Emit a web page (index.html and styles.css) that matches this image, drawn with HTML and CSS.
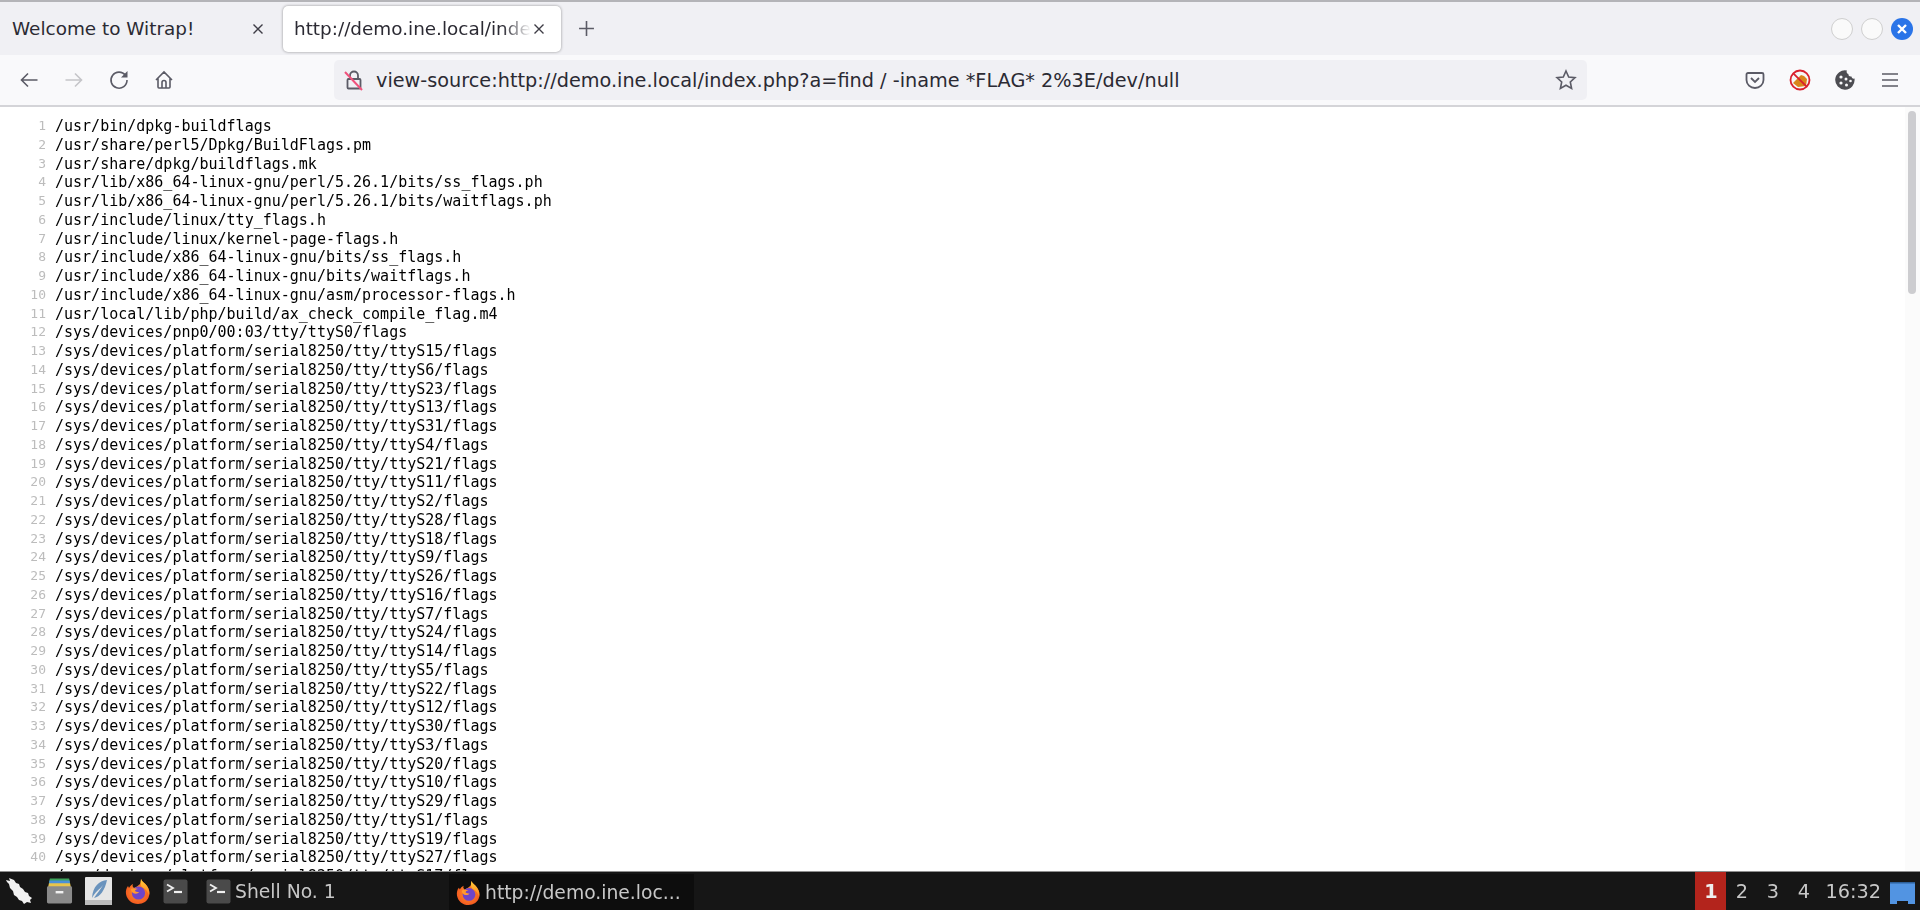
FILE: index.html
```html
<!DOCTYPE html>
<html lang="en">
<head>
<meta charset="utf-8">
<title>view-source</title>
<link rel="stylesheet" href="styles.css">
</head>
<body>
<svg class="defs" width="0" height="0" aria-hidden="true">
  <defs>
    <radialGradient id="fxBody" cx="50%" cy="50%" r="55%"><stop offset="0" stop-color="#ff9a2e"/><stop offset="1" stop-color="#f2551f"/></radialGradient>
    <linearGradient id="fxFlame" x1="0" y1="0" x2="0" y2="1"><stop offset="0" stop-color="#ffd23a"/><stop offset="1" stop-color="#ff7a1f"/></linearGradient>
    <symbol id="firefox" viewBox="0 0 26 26">
      <path d="M16 1c1 3 4 4 6 7 2 3 3 6 2 10-1 5-6 8-11 8C7 26 2 22 1 16c-.4-3 .2-6 2-8l1 2c1-2 2-3 4-4-1 2 0 3 1 4 2-1 4-2 6-4 1-2 1-3 1-5z" fill="url(#fxBody)"/>
      <path d="M16 1c1 3 4 4 6 7 2 3 3 6 2 10-1-4-3-7-7-9-1-1-2-3-1-8z" fill="url(#fxFlame)"/>
      <circle cx="13.5" cy="15" r="6.6" fill="#6e45c9"/>
      <path d="M6 11c2-1 5-1 7 0 -2 0-3 1-3 2 1 1 3 1 4 1-1 2-4 2-6 1-1-1-2-2-2-4z" fill="#ff9a2e"/>
    </symbol>
    <symbol id="term" viewBox="0 0 25 25">
      <rect x=".5" y=".5" width="24" height="24" rx="2" fill="#4a4a4a"/>
      <path d="M4 5.5l6 3.5-6 3.5" fill="none" stroke="#f0f0f0" stroke-width="1.8"/>
      <path d="M11 13h8" stroke="#f0f0f0" stroke-width="2.2"/>
    </symbol>
  </defs>
</svg>
<div class="window">
  <header class="tabstrip">
    <div class="tab tab-idle">
      <span class="tab-title">Welcome to Witrap!</span>
      <svg class="tab-close" viewBox="0 0 12 12"><path d="M1.5 1.5l9 9M10.5 1.5l-9 9"/></svg>
    </div>
    <div class="tab tab-active">
      <span class="tab-title tab-fade">http://demo.ine.local/index.php?a=find</span>
      <svg class="tab-close" viewBox="0 0 12 12"><path d="M1.5 1.5l9 9M10.5 1.5l-9 9"/></svg>
    </div>
    <svg class="new-tab" viewBox="0 0 16 16"><path d="M8 1v14M1 8h14"/></svg>
    <div class="win-controls">
      <span class="win-btn"></span>
      <span class="win-btn"></span>
      <span class="win-btn win-close"><svg viewBox="0 0 22 22"><path d="M7 7l8 8M15 7l-8 8"/></svg></span>
    </div>
  </header>
  <nav class="toolbar">
    <div class="nav-group">
      <svg class="icon" viewBox="0 0 20 20"><path d="M18.5 10H2.5M9 3.5L2.5 10 9 16.5"/></svg>
      <svg class="icon icon-off" viewBox="0 0 20 20"><path d="M1.5 10h16M11 3.5l6.500 6.500-6.500 6.500"/></svg>
      <svg class="icon" viewBox="0 0 20 20"><path d="M16.500 5.500A8 8 0 1 0 18 10"/><path class="solid" d="M12 7.500h6.500V1z"/></svg>
      <svg class="icon" viewBox="0 0 20 20"><path d="M2 10L10 2l8 8M4 8.500V17a1 1 0 0 0 1 1h10a1 1 0 0 0 1-1V8.500M8 18v-5.500a2 2 0 0 1 4 0V18"/></svg>
    </div>
    <div class="urlbar">
      <svg class="lock" viewBox="0 0 22 22">
        <path d="M7 10V6.500a4 4 0 0 1 8 0V10M5.500 10h11a1 1 0 0 1 1 1v7.500a1 1 0 0 1-1 1h-11a1 1 0 0 1-1-1V11a1 1 0 0 1 1-1z" fill="none" stroke="#5b5b66" stroke-width="1.8"/>
        <path d="M2 3l17 18" fill="none" stroke="#f0527c" stroke-width="2"/>
      </svg>
      <span class="url-text">view-source:http://demo.ine.local/index.php?a=find / -iname *FLAG* 2%3E/dev/null</span>
      <svg class="star" viewBox="0 0 22 22"><path d="M11 2l2.700 6 6.300.7-4.700 4.300 1.300 6.500L11 16.200 5.400 19.500 6.700 13 2 8.700 8.300 8z"/></svg>
    </div>
    <div class="tool-group">
      <svg class="icon pocket" viewBox="0 0 20 20"><path d="M3 3h14a1.500 1.500 0 0 1 1.500 1.500V10a8.500 8 0 0 1-17 0V4.500A1.500 1.500 0 0 1 3 3z"/><path d="M6 8l4 4 4-4"/></svg>
      <svg class="addon" viewBox="0 0 22 22">
        <circle cx="11" cy="11" r="9.500" fill="#f6f6f6"/>
        <path d="M4 14l8-8 3 1 3 3-1 7-8 1z" fill="#d9851c"/>
        <circle cx="11" cy="11" r="9.500" fill="none" stroke="#d9202e" stroke-width="1.800"/>
        <path d="M4.300 4.300l13.400 13.400" stroke="#d9202e" stroke-width="1.800"/>
      </svg>
      <svg class="addon" viewBox="0 0 22 22">
        <path d="M13 1.500a9.700 9.700 0 1 0 7.500 8c-1.500.5-3-.5-3-2-2 .5-3.500-1-3-2.500-1.500 0-2.500-2-1.500-3.500z" fill="#4d4d52"/>
        <circle cx="7" cy="8" r="1.600" fill="#f9f9fb"/><circle cx="12" cy="10" r="1.500" fill="#f9f9fb"/><circle cx="7" cy="14" r="1.600" fill="#f9f9fb"/><circle cx="12.500" cy="16" r="1.500" fill="#f9f9fb"/><circle cx="16.500" cy="12" r="1.300" fill="#f9f9fb"/>
      </svg>
      <svg class="icon menu" viewBox="0 0 20 20"><path d="M2 4h16M2 10h16M2 16h16"/></svg>
    </div>
  </nav>
  <main class="viewport">
    <ol class="source">
      <li>/usr/bin/dpkg-buildflags</li>
      <li>/usr/share/perl5/Dpkg/BuildFlags.pm</li>
      <li>/usr/share/dpkg/buildflags.mk</li>
      <li>/usr/lib/x86_64-linux-gnu/perl/5.26.1/bits/ss_flags.ph</li>
      <li>/usr/lib/x86_64-linux-gnu/perl/5.26.1/bits/waitflags.ph</li>
      <li>/usr/include/linux/tty_flags.h</li>
      <li>/usr/include/linux/kernel-page-flags.h</li>
      <li>/usr/include/x86_64-linux-gnu/bits/ss_flags.h</li>
      <li>/usr/include/x86_64-linux-gnu/bits/waitflags.h</li>
      <li>/usr/include/x86_64-linux-gnu/asm/processor-flags.h</li>
      <li>/usr/local/lib/php/build/ax_check_compile_flag.m4</li>
      <li>/sys/devices/pnp0/00:03/tty/ttyS0/flags</li>
      <li>/sys/devices/platform/serial8250/tty/ttyS15/flags</li>
      <li>/sys/devices/platform/serial8250/tty/ttyS6/flags</li>
      <li>/sys/devices/platform/serial8250/tty/ttyS23/flags</li>
      <li>/sys/devices/platform/serial8250/tty/ttyS13/flags</li>
      <li>/sys/devices/platform/serial8250/tty/ttyS31/flags</li>
      <li>/sys/devices/platform/serial8250/tty/ttyS4/flags</li>
      <li>/sys/devices/platform/serial8250/tty/ttyS21/flags</li>
      <li>/sys/devices/platform/serial8250/tty/ttyS11/flags</li>
      <li>/sys/devices/platform/serial8250/tty/ttyS2/flags</li>
      <li>/sys/devices/platform/serial8250/tty/ttyS28/flags</li>
      <li>/sys/devices/platform/serial8250/tty/ttyS18/flags</li>
      <li>/sys/devices/platform/serial8250/tty/ttyS9/flags</li>
      <li>/sys/devices/platform/serial8250/tty/ttyS26/flags</li>
      <li>/sys/devices/platform/serial8250/tty/ttyS16/flags</li>
      <li>/sys/devices/platform/serial8250/tty/ttyS7/flags</li>
      <li>/sys/devices/platform/serial8250/tty/ttyS24/flags</li>
      <li>/sys/devices/platform/serial8250/tty/ttyS14/flags</li>
      <li>/sys/devices/platform/serial8250/tty/ttyS5/flags</li>
      <li>/sys/devices/platform/serial8250/tty/ttyS22/flags</li>
      <li>/sys/devices/platform/serial8250/tty/ttyS12/flags</li>
      <li>/sys/devices/platform/serial8250/tty/ttyS30/flags</li>
      <li>/sys/devices/platform/serial8250/tty/ttyS3/flags</li>
      <li>/sys/devices/platform/serial8250/tty/ttyS20/flags</li>
      <li>/sys/devices/platform/serial8250/tty/ttyS10/flags</li>
      <li>/sys/devices/platform/serial8250/tty/ttyS29/flags</li>
      <li>/sys/devices/platform/serial8250/tty/ttyS1/flags</li>
      <li>/sys/devices/platform/serial8250/tty/ttyS19/flags</li>
      <li>/sys/devices/platform/serial8250/tty/ttyS27/flags</li>
      <li>/sys/devices/platform/serial8250/tty/ttyS17/flags</li>
    </ol>
    <div class="scrolltrack"><div class="scrollthumb"></div></div>
  </main>
</div>
<footer class="taskbar">
  <div class="launchers">
    <svg class="launch launch-wm" viewBox="0 0 30 30"><path d="M2 4l4 1-1-3 5 2 2 3 3 1 1 3 3 2 2 3 3 1 1 3 3 2-2 2 1 3-4-1-3 2-2-3-3-1-2-3-3-2-1-4-3-3-1-4-2-2z" fill="#f2f2f2"/></svg>
    <svg class="launch" viewBox="0 0 28 28">
      <path d="M4 1h20l1 5H3z" fill="#3fa35c"/><path d="M3.500 3h21l.5 5H3z" fill="#4a90d9"/><path d="M3 6h22l1 5H2z" fill="#e8c54a"/>
      <rect x="1" y="9" width="26" height="18" rx="1.500" fill="#8a8a8a"/><rect x="10" y="14" width="8" height="2.500" fill="#f0f0f0"/>
    </svg>
    <svg class="launch" viewBox="0 0 27 28">
      <rect width="27" height="28" rx="1" fill="#e6e6e6"/><rect y="23" width="27" height="5" fill="#bdbdbd"/>
      <path d="M22 3C14 4 8 9 7 21c3-6 8-9 11-13-2 4-6 8-9 13 6-1 11-8 13-18z" fill="#6a93bd"/>
    </svg>
    <svg class="launch launch-fx"><use href="#firefox"/></svg>
    <svg class="launch launch-term"><use href="#term"/></svg>
  </div>
  <div class="task task-shell">
    <svg class="task-icon"><use href="#term"/></svg>
    <span class="task-label">Shell No. 1</span>
  </div>
  <div class="task task-browser">
    <svg class="task-icon"><use href="#firefox"/></svg>
    <span class="task-label">http://demo.ine.loc...</span>
  </div>
  <div class="tray">
    <span class="ws ws-active">1</span>
    <span class="ws">2</span>
    <span class="ws">3</span>
    <span class="ws">4</span>
    <span class="clock">16:32</span>
    <svg class="desk" viewBox="0 0 25 22"><path d="M0 1h25v21h-7v-3H7v3H0z" fill="#5294e2"/><path d="M0 0h25v1.500H0z" fill="#2c5f99"/></svg>
  </div>
</footer>
</body>
</html>
```

FILE: styles.css
```css
* { box-sizing: border-box; }
html, body { margin: 0; height: 100%; overflow: hidden; }
body {
  display: flex;
  flex-direction: column;
  height: 910px;
  background: #fff;
  font-family: "DejaVu Sans", sans-serif;
  filter: blur(.35px);
}
.defs { position: absolute; }
.window { flex: 1; min-height: 0; display: flex; flex-direction: column; overflow: hidden; }

.tabstrip {
  height: 55px;
  flex: none;
  display: flex;
  align-items: center;
  padding: 3px 7px 3px 0;
  background: #f0f0f4;
  border-top: 2px solid #b4b4b8;
}
.tab {
  height: 46px;
  flex: none;
  display: flex;
  align-items: center;
  color: #2b2a33;
  font-size: 18.400px;
}
.tab-idle { width: 275px; padding: 0 11px 0 12px; }
.tab-active {
  width: 278px;
  margin-left: 8px;
  background: #fff;
  border-radius: 5px;
  box-shadow: 0 0 3px rgba(0,0,0,.4);
  padding: 0 16px 0 11px;
}
.tab-title { flex: 1; min-width: 0; overflow: hidden; white-space: nowrap; }
.tab-fade {
  -webkit-mask-image: linear-gradient(to right, #000 88%, transparent 100%);
  mask-image: linear-gradient(to right, #000 88%, transparent 100%);
}
.tab-close { width: 12px; height: 12px; flex: none; margin-left: 2px; }
.tab-close path { stroke: #3e3d46; stroke-width: 1.400; fill: none; }
.new-tab { width: 17px; height: 17px; margin-left: 17px; }
.new-tab path { stroke: #5b5b66; stroke-width: 1.500; fill: none; }
.win-controls { margin-left: auto; display: flex; gap: 8px; }
.win-btn {
  width: 22px;
  height: 22px;
  border-radius: 50%;
  background: #fafafa;
  border: 1px solid #cfcfcf;
}
.win-close { background: #2a74e8; border: 0; }
.win-close svg { display: block; width: 22px; height: 22px; }
.win-close path { stroke: #fff; stroke-width: 2.400; fill: none; }

.toolbar {
  height: 52px;
  flex: none;
  display: flex;
  align-items: center;
  padding-right: 12px;
  background: #f9f9fb;
  border-bottom: 2px solid #d4d4d8;
}
.icon { width: 20px; height: 20px; flex: none; }
.icon path { fill: none; stroke: #5b5b66; stroke-width: 1.600; }
.icon path.solid { fill: #5b5b66; stroke: none; }
.icon-off path { stroke: #c5c5c9; }
.nav-group {
  width: 334px;
  display: flex;
  align-items: center;
  gap: 25px;
  padding-left: 19px;
}
.urlbar {
  width: 1253px;
  height: 40px;
  flex: none;
  display: flex;
  align-items: center;
  padding: 0 10px 0 9px;
  background: #f0f0f4;
  border-radius: 5px;
  color: #2b2a33;
  font-size: 19.250px;
}
.lock { width: 22px; height: 22px; flex: none; }
.url-text { margin-left: 11px; flex: 1; white-space: nowrap; }
.star { width: 22px; height: 22px; flex: none; }
.star path { fill: none; stroke: #5b5b66; stroke-width: 1.600; }
.tool-group {
  flex: 1;
  display: flex;
  align-items: center;
  justify-content: space-between;
  padding: 0 8px 0 158px;
}
.addon { width: 22px; height: 22px; flex: none; }
.pocket path { stroke-width: 1.800; }

.viewport { flex: 1; min-height: 0; position: relative; overflow: hidden; padding-top: 10px; }
.source {
  margin: 0;
  padding: 0;
  list-style: none;
  counter-reset: line;
  font: 15px/18.750px "DejaVu Sans Mono", monospace;
  color: #000;
}
.source li {
  counter-increment: line;
  display: flex;
  white-space: pre;
}
.source li::before {
  content: counter(line);
  box-sizing: border-box;
  width: 55px;
  padding-right: 9px;
  text-align: right;
  color: #bcbcbc;
  font-size: 13px;
}
.scrolltrack {
  position: absolute;
  top: 0;
  right: 0;
  bottom: 0;
  width: 15px;
  background: #fbfbfb;
}
.scrollthumb {
  width: 8px;
  height: 183px;
  margin: 4px 0 0 3px;
  border-radius: 4px;
  background: #cdcdd0;
}

.taskbar {
  height: 39px;
  flex: none;
  display: flex;
  align-items: stretch;
  background: #161616;
  border-top: 1px solid #8e8e8e;
  color: #c8c8c8;
}
.launchers { display: flex; align-items: center; gap: 12px; padding-left: 4px; width: 206px; }
.launch { width: 27px; height: 28px; flex: none; }
.launch-wm { width: 30px; height: 30px; }
.launch-fx { width: 26px; height: 26px; margin-left: 1px; }
.launch-term { width: 25px; height: 25px; }
.task { display: flex; align-items: center; gap: 4px; font-size: 18.750px; }
.task-icon { width: 25px; height: 25px; flex: none; }
.task-shell { width: 243px; }
.task-label { white-space: nowrap; }
.task-browser {
  width: 245px;
  padding-left: 7px;
  margin-top: 2px;
  background: #0d0d0d;
}
.tray { margin-left: auto; display: flex; align-items: center; font-size: 19.300px; }
.ws { width: 31px; height: 100%; display: flex; align-items: center; justify-content: center; }
.ws-active { background: #b3241c; color: #eee; font-weight: 700; }
.clock { padding: 0 9px 0 6px; }
.desk { width: 25px; height: 22px; margin: 4px 5px 0 0; }
```
